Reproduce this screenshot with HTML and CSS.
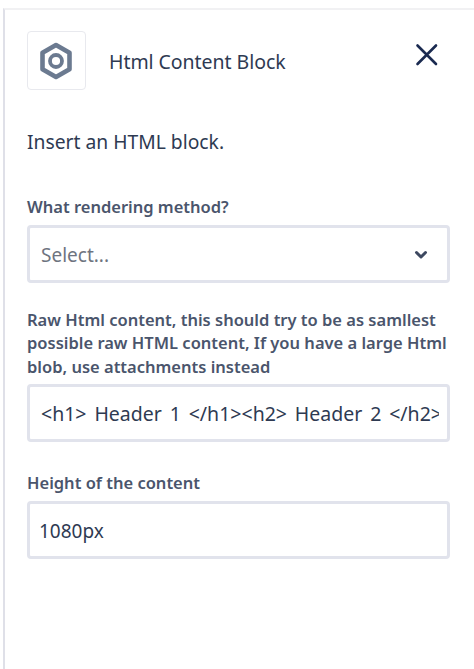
FILE: index.html
```html
<!DOCTYPE html>
<html lang="en">
<head>
<meta charset="utf-8">
<title>Html Content Block</title>
<link rel="stylesheet" href="styles.css">
</head>
<body>
<aside class="panel">
  <header class="head">
    <div class="icon-box">
      <svg width="36" height="38" viewBox="0 0 36 38" fill="none" stroke="#6b7a90">
        <path d="M18 3 L31.500 10.800 V27.200 L18 35 L4.500 27.200 V10.800 Z" stroke-width="4.600" stroke-linejoin="round"/>
        <circle cx="18" cy="19" r="6" stroke-width="3.800"/>
      </svg>
    </div>
    <h1 class="title">Html Content Block</h1>
    <svg class="close" width="24" height="24" viewBox="0 0 24 24" fill="none" stroke="#1a2a50" stroke-width="2.600" stroke-linecap="round">
      <path d="M2.500 2.500 L21 21 M21 2.500 L2.500 21"/>
    </svg>
  </header>
  <p class="desc">Insert an HTML block.</p>
  <div class="field first">
    <label class="label">What rendering method?</label>
    <div class="control select">
      <span class="placeholder">Select...</span>
      <svg width="14" height="10" viewBox="0 0 14 10" fill="none" stroke="#3d4860" stroke-width="3" stroke-linecap="round" stroke-linejoin="round">
        <path d="M2.500 2.500 L7 7 L11.500 2.500"/>
      </svg>
    </div>
  </div>
  <div class="field second">
    <label class="label" for="raw">Raw Html content, this should try to be as samllest possible raw HTML content, If you have a large Html blob, use attachments instead</label>
    <input class="control input raw" id="raw" type="text" value="&lt;h1&gt; Header 1 &lt;/h1&gt;&lt;h2&gt; Header 2 &lt;/h2&gt; some more text">
  </div>
  <div class="field third">
    <label class="label" for="height">Height of the content</label>
    <input class="control input" id="height" type="text" value="1080px">
  </div>
</aside>
</body>
</html>
```
FILE: styles.css
```css
* { box-sizing: border-box; }
html, body { margin: 0; height: 100%; background: #fff; }
body {
  padding: 8px 0 0 3px;
  font-family: "Noto Sans", "Open Sans", sans-serif;
  overflow: hidden;
}
.panel {
  height: 661px;
  border-top: 2px solid #f1f1f3;
  border-left: 2px solid #dfe0e8;
  padding: 21px 24px 0 22px;
}
.head { display: flex; align-items: flex-start; }
.icon-box {
  width: 59px;
  height: 59px;
  border: 1px solid #e8e9ee;
  border-radius: 4px;
  padding-right: 2px;
  display: flex;
  align-items: center;
  justify-content: center;
}
.title {
  margin: 18px 0 0 23px;
  font-size: 19.5px;
  line-height: 26px;
  font-weight: 400;
  color: #2e3a52;
  flex: 1;
  letter-spacing: -0.05px;
}
.close { margin: 12px 11px 0 0; }
.desc {
  margin: 38px 0 0;
  font-size: 19.3px;
  line-height: 28px;
  color: #2e3a52;
}
.field.first { margin-top: 39px; }
.field.second { margin-top: 25px; }
.field.third { margin-top: 29px; }
.label {
  display: block;
  font-size: 16.5px;
  line-height: 23.500px;
  font-weight: 600;
  color: #4a556c;
  margin-bottom: 6px;
}
.control {
  display: flex;
  width: 423px;
  height: 58px;
  border: 3px solid #e1e3ec;
  border-radius: 4px;
  background: #fff;
  font-family: inherit;
  font-size: 19px;
}
.select {
  align-items: center;
  justify-content: space-between;
  padding: 2px 19px 0 11px;
}
.placeholder { color: #6e7480; }
.input {
  color: #2e3a52;
  padding: 2px 9px 0;
  outline: none;
}
.raw {
  padding: 1px 8px 0 11px;
  font-size: 19.5px;
  word-spacing: 2.800px;
}
```
